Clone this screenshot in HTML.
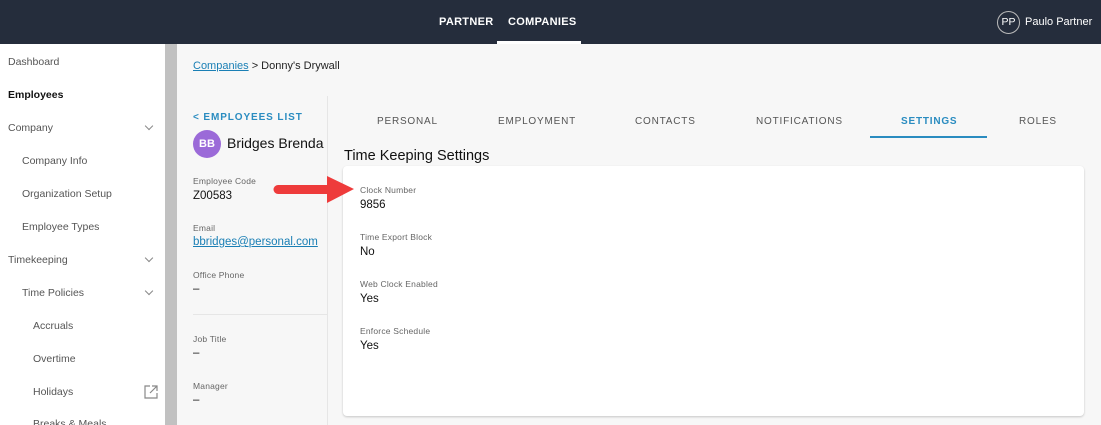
<!DOCTYPE html>
<html><head><style>
*{margin:0;padding:0;box-sizing:border-box}
html,body{width:1101px;height:425px;overflow:hidden}
body{font-family:"Liberation Sans",sans-serif;background:#f7f7f7;position:relative;color:#222}
.hdr{position:absolute;left:0;top:0;width:1101px;height:44px;background:#252d3c}
.hdr .n{position:absolute;top:16px;color:#fff;font-size:11px;font-weight:bold;letter-spacing:.3px}
.side{position:absolute;left:0;top:44px;width:165px;height:381px;background:#fff;overflow:hidden}
.side div{position:absolute;font-size:10.5px;color:#555}
.chev{position:absolute;width:6px;height:6px;border-right:1px solid #888;border-bottom:1px solid #888;transform:rotate(45deg)}
.sb{position:absolute;left:165px;top:44px;width:12px;height:381px;background:#c1c1c1}
.abs{position:absolute}
.lbl{position:absolute;font-size:8.5px;color:#666;letter-spacing:.2px}
.val{position:absolute;font-size:11.5px;color:#111}
.tab{position:absolute;top:116px;font-size:10px;color:#555;letter-spacing:.8px}
</style></head><body>
<div class="hdr">
<div class="n" style="left:439px">PARTNER</div>
<div class="n" style="left:508px">COMPANIES</div>
<div class="abs" style="left:497px;top:41px;width:84px;height:3px;background:#fff"></div>
<div class="abs" style="left:997px;top:11px;width:23px;height:23px;border:1px solid #bbb;border-radius:50%;color:#fff;font-size:10.5px;text-align:center;line-height:21px">PP</div>
<div class="abs" style="left:1025px;top:16px;color:#fff;font-size:11px">Paulo Partner</div>
</div>
<div class="side">
<div style="left:8px;top:12px">Dashboard</div>
<div style="left:8px;top:45px;color:#111;font-weight:bold">Employees</div>
<div style="left:8px;top:78px">Company</div>
<span class="chev" style="left:146px;top:79px"></span>
<div style="left:22px;top:111px">Company Info</div>
<div style="left:22px;top:144px">Organization Setup</div>
<div style="left:22px;top:177px">Employee Types</div>
<div style="left:8px;top:210px">Timekeeping</div>
<span class="chev" style="left:146px;top:211px"></span>
<div style="left:22px;top:243px">Time Policies</div>
<span class="chev" style="left:146px;top:244px"></span>
<div style="left:33px;top:276px">Accruals</div>
<div style="left:33px;top:309px">Overtime</div>
<div style="left:33px;top:342px">Holidays</div>
<svg class="abs" style="left:144px;top:341px" width="14" height="14" viewBox="0 0 14 14"><path d="M6 1H1v12h12V8M8 1h5v5M13 1L6 8" fill="none" stroke="#888" stroke-width="1.2"/></svg>
<div style="left:33px;top:374px">Breaks &amp; Meals</div>
</div>
<div class="sb"></div>
<div class="abs" style="left:193px;top:60px;font-size:11px"><span style="color:#1a7fb5;text-decoration:underline">Companies</span> &gt; Donny's Drywall</div>
<div class="abs" style="left:327px;top:96px;width:1px;height:329px;background:#e6e6e6"></div>
<div class="abs" style="left:193px;top:112px;font-size:10px;color:#2a8cc0;font-weight:bold;letter-spacing:.9px">&lt; EMPLOYEES LIST</div>
<div class="abs" style="left:193px;top:130px;width:28px;height:28px;border-radius:50%;background:#9b6ad8;color:#fff;font-size:11px;font-weight:bold;text-align:center;line-height:28px">BB</div>
<div class="abs" style="left:227px;top:135px;font-size:14px;color:#111">Bridges Brenda</div>
<div class="lbl" style="left:193px;top:176px">Employee Code</div>
<div class="val" style="left:193px;top:190px">Z00583</div>
<div class="lbl" style="left:193px;top:223px">Email</div>
<div class="val" style="left:193px;top:236px;color:#1a7fb5;text-decoration:underline;font-size:11.5px">bbridges@personal.com</div>
<div class="lbl" style="left:193px;top:270px">Office Phone</div>
<div class="val" style="left:193px;top:283px">–</div>
<div class="abs" style="left:193px;top:314px;width:134px;height:1px;background:#e6e6e6"></div>
<div class="lbl" style="left:193px;top:334px">Job Title</div>
<div class="val" style="left:193px;top:347px">–</div>
<div class="lbl" style="left:193px;top:381px">Manager</div>
<div class="val" style="left:193px;top:394px">–</div>
<div class="tab" style="left:377px">PERSONAL</div>
<div class="tab" style="left:498px">EMPLOYMENT</div>
<div class="tab" style="left:635px">CONTACTS</div>
<div class="tab" style="left:756px">NOTIFICATIONS</div>
<div class="tab" style="left:901px;color:#2a8cc0;font-weight:bold">SETTINGS</div>
<div class="tab" style="left:1019px">ROLES</div>
<div class="abs" style="left:870px;top:136px;width:117px;height:2px;background:#2a8cc0"></div>
<div class="abs" style="left:344px;top:148px;font-size:14.5px;color:#111">Time Keeping Settings</div>
<div class="abs" style="left:343px;top:166px;width:741px;height:250px;background:#fff;border-radius:4px;box-shadow:0 1px 2px rgba(0,0,0,.2)"></div>
<div class="lbl" style="left:360px;top:185px">Clock Number</div>
<div class="val" style="left:360px;top:199px">9856</div>
<div class="lbl" style="left:360px;top:232px">Time Export Block</div>
<div class="val" style="left:360px;top:246px">No</div>
<div class="lbl" style="left:360px;top:279px">Web Clock Enabled</div>
<div class="val" style="left:360px;top:293px">Yes</div>
<div class="lbl" style="left:360px;top:326px">Enforce Schedule</div>
<div class="val" style="left:360px;top:340px">Yes</div>
<svg class="abs" style="left:270px;top:170px" width="90" height="40"><path d="M8 15H57V6L84 19L57 33V24H8A4.5 4.5 0 0 1 8 15Z" fill="#ee3b3b"/></svg>
</body></html>
